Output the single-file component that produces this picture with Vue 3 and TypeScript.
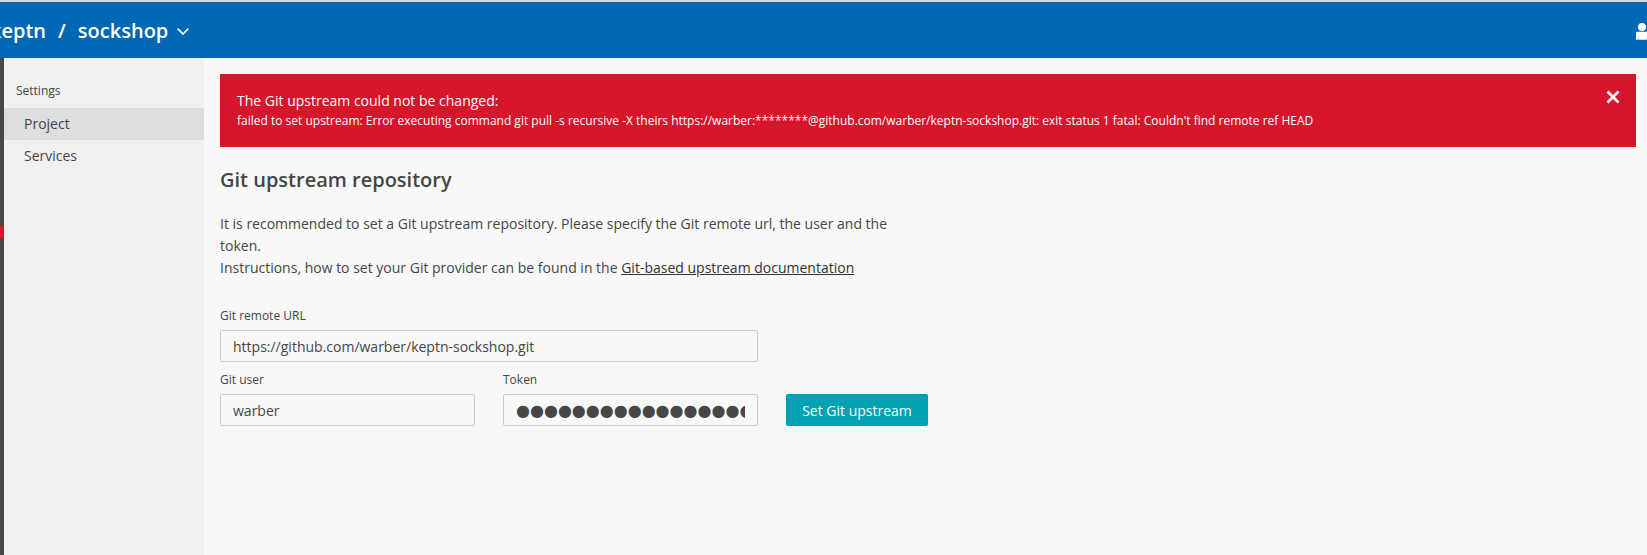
<script setup lang="ts">
const message: string = "failed to set upstream: Error executing command git pull -s recursive -X theirs https://warber:********@github.com/warber/keptn-sockshop.git: exit status 1 fatal: Couldn't find remote ref HEAD";
const token: string = "●".repeat(30);
</script>

<template>
  <div class="page">
    <header class="topbar">
      <div class="brand">
        <span class="crumb">keptn</span>
        <span class="slash">/</span>
        <span class="crumb">sockshop</span>
        <svg class="chev" width="12" height="7" viewBox="0 0 12 7"><path d="M0.7 0.7 L6 6 L11.3 0.7" fill="none" stroke="#fff" stroke-width="1.7"/></svg>
      </div>
      <svg class="user" width="16" height="17" viewBox="0 0 16 17">
        <circle cx="6" cy="4" r="4" fill="#fff"/>
        <path d="M0 16.7 V10 Q0 8.7 1.3 8.7 H16 V16.7 Z" fill="#fff"/>
        <path d="M2.5 13.5 V16.7 M11 13.5 V16.7" stroke="#0068b4" stroke-opacity="0.45" stroke-width="0.8"/>
      </svg>
    </header>
    <div class="body">
      <div class="rail"><span class="rail-mark"></span></div>
      <nav class="side">
        <div class="side-title">Settings</div>
        <div class="side-item active">Project</div>
        <div class="side-item">Services</div>
      </nav>
      <main class="main">
        <div class="alert">
          <div>
            <div class="alert-title">The Git upstream could not be changed:</div>
            <div class="alert-msg">{{ message }}</div>
          </div>
          <svg class="close" width="14" height="14" viewBox="0 0 14 14"><path d="M1.5 1.5 L12.5 12.5 M12.5 1.5 L1.5 12.5" stroke="#fff" stroke-width="2.6"/></svg>
        </div>
        <h2 class="heading">Git upstream repository</h2>
        <p class="desc">
          It is recommended to set a Git upstream repository. Please specify the Git remote url, the user and the token.<br />
          Instructions, how to set your Git provider can be found in the <a class="link">Git-based upstream documentation</a>
        </p>
        <div class="form">
          <label class="label">Git remote URL</label>
          <input class="input wide" value="https://github.com/warber/keptn-sockshop.git" />
          <div class="row">
            <div class="field">
              <label class="label">Git user</label>
              <input class="input" value="warber" />
            </div>
            <div class="field">
              <label class="label">Token</label>
              <input class="input secret" :value="token" />
            </div>
            <button class="btn">Set Git upstream</button>
          </div>
        </div>
      </main>
    </div>
  </div>
</template>

<style>
html, body { margin: 0; padding: 0; overflow: hidden; }
</style>

<style scoped>
.page {
  width: 1647px;
  height: 555px;
  display: flex;
  flex-direction: column;
  font-family: "Open Sans", "Noto Sans", sans-serif;
  color: #454646;
  overflow: hidden;
  border-top: 2px solid #d4d4d4;
  box-sizing: border-box;
}
.topbar {
  height: 56px;
  flex: none;
  background: #0068b4;
  color: #fff;
  display: flex;
  align-items: center;
  justify-content: space-between;
}
.brand {
  display: flex;
  align-items: center;
  margin-left: -10px;
  font-size: 20px;
  font-weight: 600;
}
.slash { margin: 0 12px 0 12px; }
.chev { margin-left: 9px; margin-top: 3px; }
.user { margin-right: -5px; flex: none; margin-top: 2px; }
.body { flex: 1; display: flex; min-height: 0; }
.rail { width: 4px; background: #454646; position: relative; flex: none; }
.rail-mark {
  position: absolute;
  left: 0;
  top: 167px;
  width: 4px;
  height: 14px;
  background: #dc172a;
  border-radius: 0 7px 7px 0;
}
.side { width: 200px; flex: none; background: #f0f0f0; padding-top: 25px; box-sizing: border-box; }
.side-title { font-size: 12px; line-height: 16px; padding-left: 12px; margin-bottom: 9px; }
.side-item { height: 32px; line-height: 32px; font-size: 14px; padding-left: 20px; }
.side-item.active { background: #dedede; }
.main { flex: 1; background: #f8f8f8; padding: 16px 11px 0 16px; min-width: 0; }
.alert {
  height: 73px;
  background: #d6162b;
  color: #fff;
  display: flex;
  justify-content: space-between;
  padding: 17px 16px 0 17px;
  box-sizing: border-box;
}
.alert-title { font-size: 14px; line-height: 19px; }
.alert-msg { font-size: 12px; line-height: 22px; }
.close { margin-top: -1px; }
.heading { font-size: 20px; font-weight: 600; line-height: 28px; margin: 19px 0 0; }
.desc { width: 680px; font-size: 14px; line-height: 22px; margin: 19px 0 0; }
.link { color: #333; text-decoration: underline; }
.form { margin-top: 29px; width: 720px; }
.label { display: block; font-size: 12px; line-height: 16px; margin-bottom: 6px; }
.input {
  display: block;
  width: 255px;
  height: 32px;
  box-sizing: border-box;
  border: 1px solid #ccc;
  border-radius: 2px;
  background: #f8f8f8;
  padding: 0 12px;
  font-family: inherit;
  font-size: 14px;
  color: #454646;
  outline: none;
}
.input.wide { width: 538px; }
.input.secret { font-family: "DejaVu Sans", sans-serif; font-size: 16px; }
.row { display: flex; align-items: flex-end; margin-top: 10px; }
.field { margin-right: 28px; }
.btn {
  height: 32px;
  width: 142px;
  border: none;
  border-radius: 2px;
  background: #00a1b2;
  color: #fff;
  font-family: inherit;
  font-size: 14px;
  padding: 0;
}
</style>
